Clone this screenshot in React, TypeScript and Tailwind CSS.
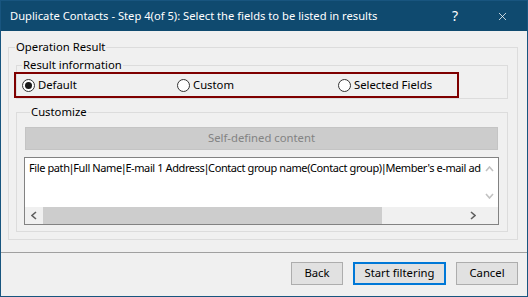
import { X } from 'lucide-react';

function Radio({ label, checked, width }: { label: string; checked?: boolean; width: string }) {
    return (
        <div className={`flex items-center gap-[3px] ${width}`}>
            <span className="w-[13px] h-[13px] rounded-full border border-[#333333] bg-white flex items-center justify-center">
                {checked && <span className="w-[7px] h-[7px] rounded-full bg-[#1a1a1a]" />}
            </span>
            <span>{label}</span>
        </div>
    );
}

function Chevron({ dir, light }: { dir: 'left' | 'right' | 'up' | 'down'; light?: boolean }) {
    const pts = {
        left: '5,1 1,4.5 5,8',
        right: '1,1 5,4.5 1,8',
        up: '1,5 4.5,1 8,5',
        down: '1,1 4.5,5 8,1',
    }[dir];
    const horiz = dir === 'left' || dir === 'right';
    return (
        <svg width={horiz ? 6 : 9} height={horiz ? 9 : 6} viewBox={horiz ? '0 0 6 9' : '0 0 9 6'}>
            <polyline points={pts} fill="none" stroke={light ? '#c2c2c2' : '#606060'} strokeWidth="1.6" />
        </svg>
    );
}

const fields = ['File path', 'Full Name', 'E-mail 1 Address', 'Contact group name(Contact group)', "Member's e-mail address", "Member's name"];

export default function App() {
    return (
        <div className="w-[528px] h-[297px] flex flex-col bg-[#f0f0f0] border border-[#18557f] font-['Noto_Sans',sans-serif] text-[11.3px] text-black overflow-hidden">
            {/* title bar */}
            <div className="h-[30px] shrink-0 bg-[#0f4a6f] text-white flex items-center pl-[9px] pr-[18px]">
                <span className="leading-[16px] text-[11.2px]">Duplicate Contacts - Step 4(of 5): Select the fields to be listed in results</span>
                <span className="ml-auto mr-[38px] text-[14px] leading-[16px]">?</span>
                <X size={13} strokeWidth={1.4} className="text-white" />
            </div>

            {/* Operation Result */}
            <fieldset className="min-w-0 mt-[8px] ml-[7px] mr-[9px] border border-[#dcdcdc] pl-[7px] pr-[9px] pb-[7px]">
                <legend className="-ml-px px-px leading-[16px]">Operation Result</legend>

                <fieldset className="min-w-0 mt-[2px] border border-[#dcdcdc]">
                    <legend className="ml-[5px] px-px leading-[16px]">Result information</legend>
                    <div className="-ml-[3px] -mt-px w-[445px] h-[26px] border-2 border-[#7f0000] flex items-center pl-[6px]">
                        <Radio label="Default" checked width="w-[155px]" />
                        <Radio label="Custom" width="w-[161px]" />
                        <Radio label="Selected Fields" width="w-auto" />
                    </div>
                </fieldset>

                <fieldset className="min-w-0 mt-[5px] border border-[#dcdcdc] pl-[7px] pr-[8px] pb-[6px]">
                    <legend className="ml-[6px] px-px leading-[16px]">Customize</legend>
                    <div className="mt-[7px] mx-px h-[23px] bg-[#cccccc] border border-[#c4c4c4] flex items-center justify-center text-[#838383]">
                        Self-defined content
                    </div>
                    <div className="mt-[7px] h-[68px] border border-[#828282] bg-white flex flex-col">
                        <div className="flex h-[49px] min-w-0">
                            <div className="flex-1 min-w-0 overflow-hidden whitespace-nowrap pl-[4px] pt-[2px] leading-[16px] text-[11px] tracking-[-0.4px]">
                                {fields.map((f, i) => (
                                    <span key={f}>
                                        {i > 0 && <span className="-mx-px">|</span>}
                                        {f}
                                    </span>
                                ))}
                            </div>
                            <div className="w-[17px] shrink-0 flex flex-col items-center justify-between py-[8px]">
                                <Chevron dir="up" light />
                                <Chevron dir="down" light />
                            </div>
                        </div>
                        <div className="flex h-[17px] bg-[#f0f0f0]">
                            <div className="w-[17px] flex items-center justify-center">
                                <Chevron dir="left" />
                            </div>
                            <div className="flex-1 flex pl-px">
                                <div className="w-[339px] bg-[#cdcdcd]" />
                            </div>
                            <div className="w-[17px] flex items-center justify-center">
                                <Chevron dir="right" />
                            </div>
                            <div className="w-[17px]" />
                        </div>
                    </div>
                </fieldset>
            </fieldset>

            <div className="mt-[12px] h-px bg-[#a0a0a0]" />

            {/* footer buttons */}
            <div className="mt-[9px] flex justify-end gap-[10px] pr-[9px]">
                <button className="w-[52px] h-[23px] bg-[#e1e1e1] border border-[#adadad]">Back</button>
                <button className="w-[93px] h-[23px] bg-[#e1e1e1] border-2 border-[#0078d7]">Start filtering</button>
                <button className="w-[62px] h-[23px] bg-[#e1e1e1] border border-[#adadad]">Cancel</button>
            </div>
        </div>
    );
}
